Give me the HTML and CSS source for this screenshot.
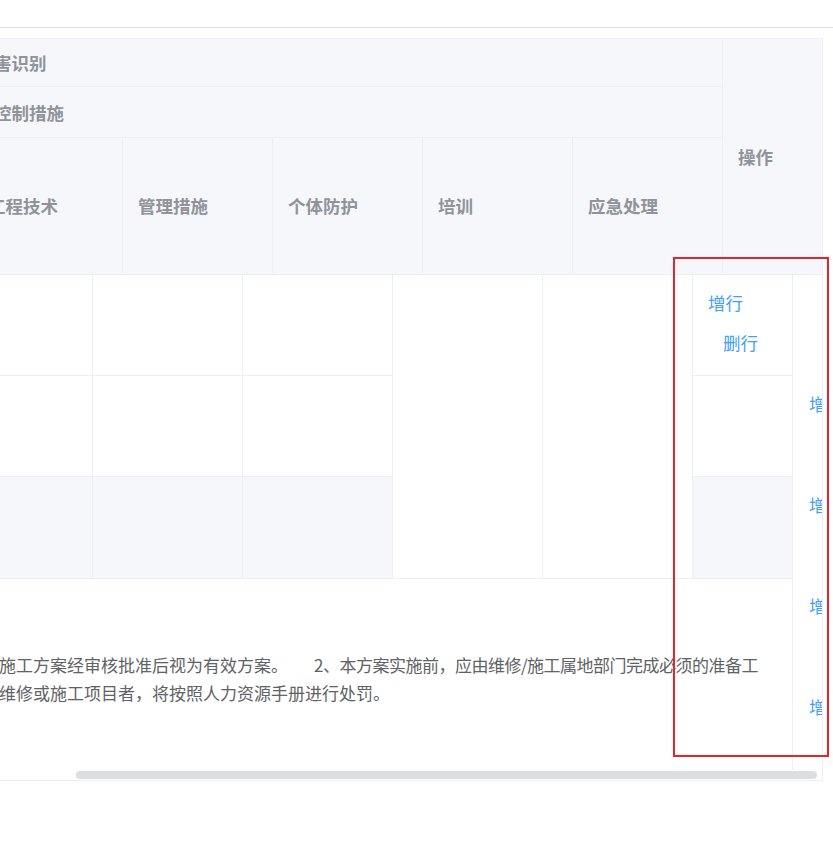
FILE: index.html
```html
<!DOCTYPE html>
<html lang="zh-CN">
<head>
<meta charset="utf-8">
<title>控制措施</title>
<link rel="stylesheet" href="styles.css">
</head>
<body>
<div class="topbar"></div>
<div class="table">
  <div class="thead">
    <div class="th-main">
      <div class="th-row r1"><span class="cut cut-a">害识别</span></div>
      <div class="th-row r2"><span class="cut cut-b">控制措施</span></div>
      <div class="th-row r3">
        <div class="th-cell first"><span class="cut cut-c">工程技术</span></div>
        <div class="th-cell">管理措施</div>
        <div class="th-cell">个体防护</div>
        <div class="th-cell">培训</div>
        <div class="th-cell">应急处理</div>
      </div>
    </div>
    <div class="th-op">操作</div>
  </div>
  <div class="tbody">
    <div class="td"></div>
    <div class="td"></div>
    <div class="td"></div>
    <div class="td span"></div>
    <div class="td span"></div>
    <div class="td op">
      <a class="link">增行</a>
      <a class="link second">删行</a>
    </div>
    <div class="td rest"></div>

    <div class="td"></div>
    <div class="td"></div>
    <div class="td"></div>
    <div class="td op"></div>
    <div class="td rest"></div>

    <div class="td stripe"></div>
    <div class="td stripe"></div>
    <div class="td stripe"></div>
    <div class="td op stripe"></div>
    <div class="td rest"></div>
  </div>
  <div class="tfoot">
    <p class="note">施工方案经审核批准后视为有效方案。<span class="item2">2、本方案实施前，应由维修/施工属地部门完成必须的准备工</span></p>
    <p class="note">维修或施工项目者，将按照人力资源手册进行处罚。</p>
  </div>
  <div class="scroll-track"><div class="scroll-bar"></div></div>
  <div class="fixed-col">
    <div class="fixed-item"><a class="link">增</a></div>
    <div class="fixed-item"><a class="link">增</a></div>
    <div class="fixed-item"><a class="link">增</a></div>
    <div class="fixed-item"><a class="link">增</a></div>
  </div>
</div>
<div class="annot"></div>
</body>
</html>
```
FILE: styles.css
```css
html, body {
  margin: 0;
  padding: 0;
  background: #ffffff;
  overflow: hidden;
}
body {
  font-family: "Noto Sans CJK SC", "Liberation Sans", sans-serif;
  color: #606266;
  width: 833px;
  height: 862px;
}
.topbar {
  height: 27px;
  border-bottom: 1px solid #dcdfe6;
}
.table {
  position: relative;
  margin-top: 10px;
  width: 823px;
  box-sizing: border-box;
  border-top: 1px solid #ebeef5;
  border-right: 1px solid #ebeef5;
  border-bottom: 1px solid #ebeef5;
  overflow: hidden;
}
.thead {
  display: flex;
  background: #f5f7fa;
  border-bottom: 1px solid #ebeef5;
  color: #909399;
  font-weight: bold;
  font-size: 17.5px;
}
.th-main {
  width: 723px;
  flex: none;
  display: flex;
  flex-direction: column;
}
.th-row {
  display: flex;
  align-items: center;
  box-sizing: border-box;
  white-space: nowrap;
  overflow: hidden;
}
.r1 { height: 48px; border-bottom: 1px solid #ebeef5; border-right: 1px solid #ebeef5; }
.r2 { height: 51px; border-bottom: 1px solid #ebeef5; border-right: 1px solid #ebeef5; }
.r3 {
  height: 136px;
  display: grid;
  grid-template-columns: 123px 150px 150px 150px 150px;
  align-items: stretch;
  padding-bottom: 1px;
}
.th-cell {
  display: flex;
  align-items: center;
  padding-left: 15px;
  border-right: 1px solid #ebeef5;
  box-sizing: border-box;
  overflow: hidden;
}
.th-cell.first { padding-left: 0; }
.cut { display: inline-block; }
.cut-a { margin-left: -6px; }
.cut-b { margin-left: -6px; }
.cut-c { margin-left: -12px; }
.th-op {
  flex: 1;
  display: flex;
  align-items: center;
  padding-left: 15px;
  padding-bottom: 1px;
  height: 235px;
  box-sizing: border-box;
}
.tbody {
  display: grid;
  grid-template-columns: 93px 150px 150px 150px 150px 100px 1fr;
  grid-template-rows: 101px 101px 102px;
}
.td {
  box-sizing: border-box;
  border-right: 1px solid #ebeef5;
  border-bottom: 1px solid #ebeef5;
  background: #ffffff;
}
.td.span { grid-row: span 3; }
.td.stripe { background: #f5f7fa; }
.td.rest { border-right: none; }
.td.op {
  padding: 16px 0 0 15px;
  font-size: 17.5px;
  line-height: 24px;
}
.link {
  color: #409eff;
  cursor: pointer;
  font-size: 17.5px;
  line-height: 24px;
}
.op .link { display: inline-block; }
.op .link.second {
  display: block;
  width: max-content;
  margin-top: 16px;
  margin-left: 15px;
}
.tfoot {
  height: 191px;
  box-sizing: border-box;
  padding-top: 72px;
  font-size: 17px;
  line-height: 28px;
  color: #606266;
}
.note {
  margin: 0 0 0 -1px;
  white-space: nowrap;
}
.item2 {
  margin-left: 26px;
  letter-spacing: -0.5px;
}
.scroll-track {
  height: 10px;
  box-sizing: border-box;
  padding: 1px 0;
}
.scroll-bar {
  margin-left: 76px;
  width: 741px;
  height: 8px;
  border-radius: 4px;
  background: #dddee1;
}
.fixed-col {
  position: absolute;
  top: 236px;
  right: 0;
  bottom: 10px;
  width: 30px;
  box-sizing: border-box;
  border-left: 1px solid #ebeef5;
  background: #ffffff;
  padding: 100px 0 0 16px;
  overflow: hidden;
  white-space: nowrap;
}
.fixed-item {
  height: 101px;
  box-sizing: border-box;
  padding-top: 17px;
}
.annot {
  position: absolute;
  left: 673px;
  top: 257px;
  width: 156px;
  height: 500px;
  box-sizing: border-box;
  border: 2px solid #e8232b;
  pointer-events: none;
}
```
